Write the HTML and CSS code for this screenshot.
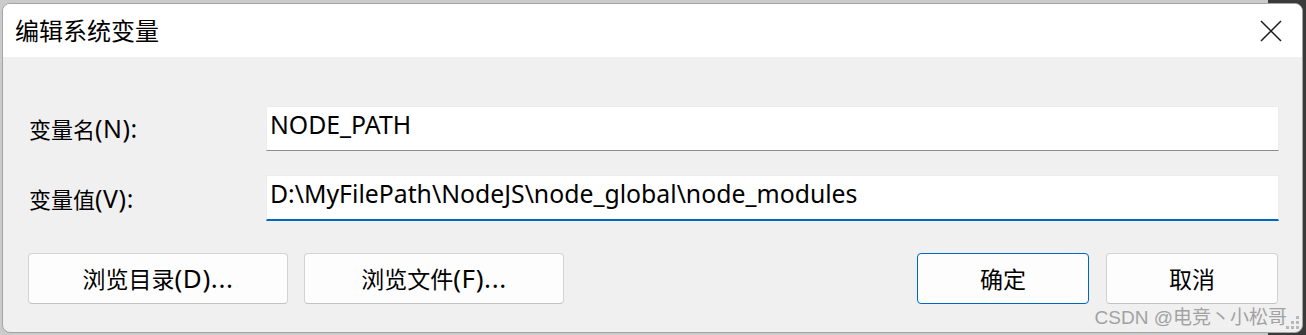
FILE: index.html
```html
<!DOCTYPE html>
<html lang="zh-CN">
<head>
<meta charset="utf-8">
<title>编辑系统变量</title>
<link rel="stylesheet" href="styles.css">
</head>
<body>
<div class="window">
  <div class="titlebar">
    <span class="title">编辑系统变量</span>
    <span class="close">
      <svg width="22" height="22" viewBox="0 0 22 22"><path d="M1 1 L21 21 M21 1 L1 21" stroke="#1b1b1b" stroke-width="1.5" fill="none"/></svg>
    </span>
  </div>
  <div class="content">
    <div class="form">
      <label class="label">变量名<span class="lat">(N):</span></label>
      <div class="field">NODE_PATH</div>
      <label class="label">变量值<span class="lat">(V):</span></label>
      <div class="field focused">D:\MyFilePath\NodeJS\node_global\node_modules</div>
    </div>
    <div class="actions">
      <div class="group">
        <button class="btn wide">浏览目录<span class="lat">(D)...</span></button>
        <button class="btn wide">浏览文件<span class="lat">(F)...</span></button>
      </div>
      <div class="group right">
        <button class="btn primary">确定</button>
        <button class="btn">取消</button>
      </div>
    </div>
  </div>
  <div class="watermark">CSDN @电竞丶小松哥</div>
  <svg class="grip" width="14" height="14" viewBox="0 0 14 14">
    <rect x="10" y="0" width="3" height="3" fill="#b8b8b8"/>
    <rect x="5" y="5" width="3" height="3" fill="#b8b8b8"/>
    <rect x="10" y="5" width="3" height="3" fill="#b8b8b8"/>
    <rect x="0" y="10" width="3" height="3" fill="#b8b8b8"/>
    <rect x="5" y="10" width="3" height="3" fill="#b8b8b8"/>
    <rect x="10" y="10" width="3" height="3" fill="#b8b8b8"/>
  </svg>
</div>
</body>
</html>
```

FILE: styles.css
```css
html, body {
  margin: 0;
  padding: 0;
}
body {
  width: 1306px;
  height: 335px;
  overflow: hidden;
  background: linear-gradient(90deg, #cbcbcb 0, #cbcbcb 1268px, #3a3a3a 1268px);
  font-family: "Noto Sans", "Noto Sans CJK SC", sans-serif;
  color: #000;
}
.window {
  position: relative;
  box-sizing: border-box;
  margin: 3px 0 0 2px;
  width: 1301px;
  height: 330px;
  border: 1px solid #a4a4a4;
  border-radius: 8px;
  overflow: hidden;
  background: #f0f0f0;
}
.titlebar {
  height: 53px;
  background: #ffffff;
  display: flex;
  align-items: center;
  justify-content: space-between;
  padding-left: 12px;
}
.title {
  font-size: 24px;
  line-height: 30px;
  margin-top: 1px;
}
.close {
  width: 62px;
  height: 53px;
  display: flex;
  align-items: center;
  justify-content: center;
}
.content {
  padding: 49px 23px 0 25px;
}
.form {
  display: grid;
  grid-template-columns: 238px 1fr;
  grid-template-rows: 45px 46px;
  row-gap: 24px;
  align-items: center;
}
.label {
  font-size: 22px;
  line-height: 28px;
  padding-left: 1px;
}
.lat {
  font-size: 1.13em;
  letter-spacing: 0.6px;
}
.field {
  box-sizing: border-box;
  height: 100%;
  background: #ffffff;
  border: 1px solid #ececec;
  border-bottom: 1px solid #8c8c8c;
  font-size: 24.8px;
  line-height: 34px;
  padding: 0 3px;
  white-space: nowrap;
}
.field.focused {
  border-bottom: 2px solid #0067c0;
}
.actions {
  margin-top: 32px;
  display: flex;
  justify-content: space-between;
}
.group {
  display: flex;
  gap: 16px;
}
.group.right {
  gap: 17px;
  margin-right: 1px;
}
.btn {
  box-sizing: border-box;
  height: 51px;
  width: 172px;
  background: #fdfdfd;
  border: 1px solid #d3d3d3;
  border-bottom-color: #c2c2c2;
  border-radius: 4px;
  font-family: "Noto Sans", "Noto Sans CJK SC", sans-serif;
  font-size: 23px;
  line-height: 30px;
  color: #000;
  padding: 0;
}
.btn.wide {
  width: 260px;
}
.btn.primary {
  border: 1px solid #0067c0;
}
.watermark {
  position: absolute;
  right: 15px;
  bottom: 1px;
  font-size: 19px;
  line-height: 26px;
  color: #a2a2a2;
  font-family: "Liberation Sans", "Noto Sans CJK SC", sans-serif;
}
.grip {
  position: absolute;
  right: 2px;
  bottom: 2px;
}
```
